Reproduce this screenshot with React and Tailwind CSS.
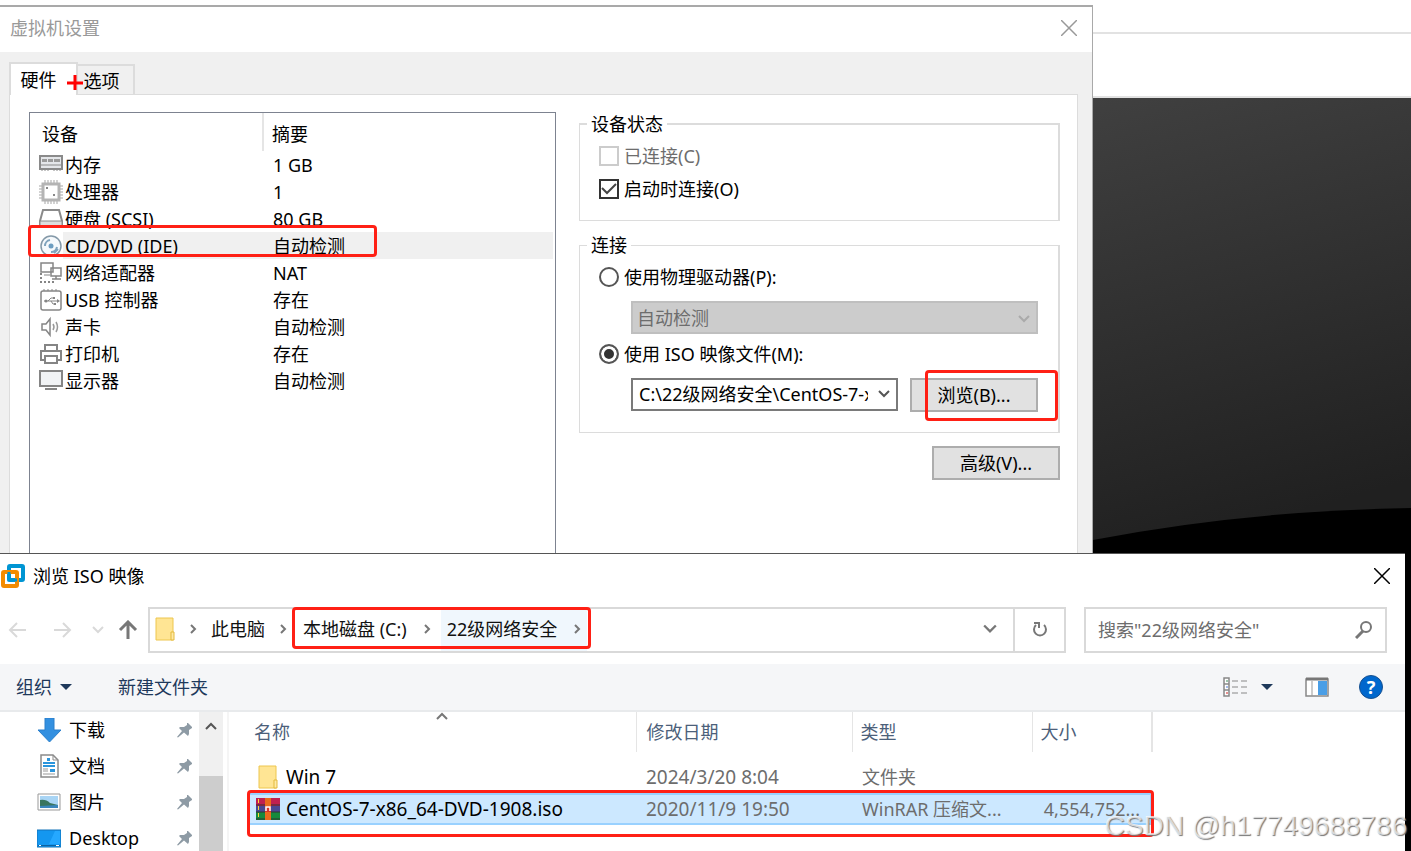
import { useState } from 'react';
import clsx from 'clsx';

const DEVICES = [
  { icon: 'memory', name: '内存', summary: '1 GB' },
  { icon: 'cpu', name: '处理器', summary: '1' },
  { icon: 'disk', name: '硬盘 (SCSI)', summary: '80 GB' },
  { icon: 'cd', name: 'CD/DVD (IDE)', summary: '自动检测' },
  { icon: 'network', name: '网络适配器', summary: 'NAT' },
  { icon: 'usb', name: 'USB 控制器', summary: '存在' },
  { icon: 'sound', name: '声卡', summary: '自动检测' },
  { icon: 'printer', name: '打印机', summary: '存在' },
  { icon: 'display', name: '显示器', summary: '自动检测' },
];

const FILES = [
  { icon: 'folder', name: 'Win 7', date: '2024/3/20 8:04', type: '文件夹', size: '' },
  { icon: 'rar', name: 'CentOS-7-x86_64-DVD-1908.iso', date: '2020/11/9 19:50', type: 'WinRAR 压缩文...', size: '4,554,752...' },
];

const QUICK_ACCESS = [
  { icon: 'download', name: '下载' },
  { icon: 'document', name: '文档' },
  { icon: 'picture', name: '图片' },
  { icon: 'desktop', name: 'Desktop' },
];

function DeviceIcon({ name }) {
  const shapes = {
    memory: (
      <>
        <path d="M1 3h22v13H1z" fill="#e4e6e9" stroke="#8a8a8a" strokeWidth="2" />
        <path d="M3 6h5v3H3zM9 6h5v3H9zM15 6h6v3h-6z" fill="#9a9a9a" />
        <path d="M1 12h22" stroke="#8a8a8a" />
        <path d="M3 16v2M6 16v2M9 16v2M15 16v2M18 16v2M21 16v2" stroke="#8a8a8a" />
      </>
    ),
    cpu: (
      <>
        <path d="M6 0v24M9 0v24M12 0v24M15 0v24M18 0v24M0 6h24M0 9h24M0 12h24M0 15h24M0 18h24" stroke="#a5a5a5" />
        <rect x="4" y="4" width="16" height="16" fill="#fff" stroke="#b4b4b4" strokeWidth="3" />
        <path d="M7 7h2v2H7zM14 14h2v2h-2z" fill="#888" />
      </>
    ),
    disk: (
      <>
        <path d="M4 3h16l3 11v6H1v-6z" fill="#fff" stroke="#8a8a8a" strokeWidth="2" />
        <path d="M1 14h22v5H1z" fill="#ddd" stroke="#8a8a8a" />
      </>
    ),
    cd: (
      <>
        <circle cx="12" cy="12" r="10" fill="#f5f9fc" stroke="#8499a8" strokeWidth="1.5" />
        <path d="M6 12a6 6 0 0 1 5-6M12 18a6 6 0 0 0 6-5M15 19l4-4" fill="none" stroke="#7fa3bd" strokeWidth="2" />
        <circle cx="12" cy="12" r="2.5" fill="#6c9dc0" />
      </>
    ),
    network: (
      <>
        <path d="M2 2h12v9H2zM12 7h10v8H12z" fill="#fff" stroke="#858585" strokeWidth="1.5" />
        <path d="M17 15v3M13 18h9" stroke="#858585" strokeWidth="1.5" />
        <path d="M2 12v9h13" fill="none" stroke="#858585" strokeWidth="2" strokeDasharray="2 2" />
        <path d="M5 14h6" stroke="#858585" />
      </>
    ),
    usb: (
      <>
        <rect x="2" y="3" width="20" height="19" rx="2" fill="#fff" stroke="#858585" strokeWidth="1.5" />
        <path d="M4 2h16" stroke="#858585" strokeDasharray="2 2" />
        <path d="M5 13h13M9 13l3-3h3M12 13l2 3h2" fill="none" stroke="#858585" />
        <circle cx="7" cy="13" r="1.5" fill="#858585" />
        <path d="M14 9h2v2h-2zM15 15h2v2h-2zM18 11l3 2-3 2z" fill="#858585" />
      </>
    ),
    sound: (
      <>
        <path d="M3 9h4l4-5v16l-4-5H3z" fill="#fff" stroke="#858585" strokeWidth="1.5" />
        <path d="M14 9q2 3 0 6M17 7q3 5 0 10" fill="none" stroke="#999" strokeWidth="1.5" />
      </>
    ),
    printer: (
      <>
        <path d="M6 9V3h12v6" fill="#fff" stroke="#858585" strokeWidth="2" />
        <path d="M2 9h20v9H2z" fill="#fff" stroke="#858585" strokeWidth="2" />
        <path d="M6 14h12v7H6z" fill="#fff" stroke="#858585" strokeWidth="2" />
      </>
    ),
    display: (
      <>
        <path d="M1 2h22v15H1z" fill="#f1f3f5" stroke="#858585" strokeWidth="2" />
        <path d="M6 20h12" stroke="#858585" strokeWidth="2" />
      </>
    ),
  };
  return (
    <svg className="h-6 w-6 shrink-0" viewBox="0 0 24 24" aria-hidden="true">
      {shapes[name]}
    </svg>
  );
}

function FileIcon({ name }) {
  const shapes = {
    folder: (
      <>
        <path d="M3 1h17v22H3z" fill="#ffe594" stroke="#edc64f" />
        <path d="M18 15h3v8h-3z" fill="#ffeaa5" stroke="#e3b93c" />
      </>
    ),
    rar: (
      <>
        <path d="M0 1h24v8H0z" fill="#c02050" />
        <path d="M0 9h24v6H0z" fill="#4a4794" />
        <path d="M0 15h24v8H0z" fill="#158a3c" />
        <path d="M0 8h24M0 15h24M0 22h24" stroke="#333" />
        <path d="M9 1h6v22H9z" fill="#ea6a1c" />
        <path d="M9 9h6v6H9z" fill="#d8322a" />
        <path d="M10 14v-4h4v4" fill="none" stroke="#fff" strokeWidth="1.5" />
        <path d="M2.5 2v20" stroke="#ffd83a" strokeDasharray="4 3" />
      </>
    ),
    download: <path d="M8 0h9v12h7L12.5 24 1 12h7z" fill="#3390e0" stroke="#2a7fcb" />,
    document: (
      <>
        <path d="M4 1h12l5 5v17H4z" fill="#fff" stroke="#8b8b8b" strokeWidth="1.5" />
        <path d="M16 1v5h5" fill="none" stroke="#8b8b8b" />
        <path d="M10 4h3v3h-3zM6 8h12v2H6zM6 11h12v2H6zM13 15h5v3h-5z" fill="#2b95dc" />
        <path d="M6 15h5M6 17h5M6 20h12" stroke="#999" />
      </>
    ),
    picture: (
      <>
        <path d="M1 4h22v16H1z" fill="#fff" stroke="#999" />
        <path d="M3 6h18v12H3z" fill="#a9d5f5" />
        <path d="M3 10q6-1 10 3l8 2v3H3z" fill="#39755f" />
        <path d="M3 16l18-1v3H3z" fill="#3b86bd" />
      </>
    ),
    desktop: (
      <>
        <path d="M0 4h24v17H0z" fill="#1497f0" stroke="#1273b9" />
        <path d="M23 5v13H12l6-13z" fill="#25a8ff" />
        <path d="M1 19.5h22" stroke="#0d62a0" />
        <path d="M2 19.5h2M19 19.5h3" stroke="#fff" />
      </>
    ),
  };
  return (
    <svg className="h-6 w-6 shrink-0" viewBox="0 0 24 24" aria-hidden="true">
      {shapes[name]}
    </svg>
  );
}

function PinIcon() {
  return (
    <svg className="h-4 w-4" viewBox="0 0 16 16" fill="#8e9ba5" aria-hidden="true">
      <path d="M10 1h1l4 4v1l-3 2v4l-1 2L7 10.5 1 15.5 0 15l5-6-3-3 1-1h4l3-2z" />
    </svg>
  );
}

function CloseIcon() {
  return (
    <svg className="h-4 w-4" viewBox="0 0 16 16" fill="none" stroke="currentColor" strokeWidth="1.5">
      <path d="M0 0l16 16M16 0L0 16" />
    </svg>
  );
}

function Chevron({ className }) {
  return (
    <svg className={clsx('h-3 w-3 shrink-0', className)} viewBox="0 0 12 12" fill="none" stroke="currentColor" strokeWidth="2">
      <path d="M1 3l5 5 5-5" />
    </svg>
  );
}

function CrumbArrow({ className }) {
  return (
    <svg className={clsx('h-2.5 w-2 shrink-0 text-[#777]', className)} viewBox="0 0 8 10" fill="none" stroke="currentColor" strokeWidth="2">
      <path d="M2 1l4 4-4 4" />
    </svg>
  );
}

// Red rectangle drawn over the thing the reader should look at
function Marker({ className }) {
  return <div className={clsx('pointer-events-none absolute z-10 rounded-sm border-3 border-[#ff2015]', className)} />;
}

function DeviceTable() {
  const [selected, setSelected] = useState('cd');

  return (
    <div className="relative w-[527px] shrink-0 border border-b-0 border-[#7d8390] pr-0.5">
      <table className="w-full table-fixed border-collapse text-left">
        <thead>
          <tr className="h-[38px]">
            <th className="w-[233px] border-r-2 border-[#e5e5e5] pl-3 pt-1 font-normal">设备</th>
            <th className="pl-2 pt-1 font-normal">摘要</th>
          </tr>
        </thead>
        <tbody>
          {DEVICES.map((device) => (
            <tr key={device.icon} onClick={() => setSelected(device.icon)} className="h-[27px]">
              <td className="p-0 pl-[9px]">
                <div className="flex h-[27px] items-center">
                  <DeviceIcon name={device.icon} />
                  <span className={clsx('flex h-[27px] flex-1 items-center pl-0.5', selected === device.icon && 'bg-[#f0f0f0]')}>
                    {device.name}
                  </span>
                </div>
              </td>
              <td className={clsx('p-0 pl-2.5', selected === device.icon && 'bg-[#f0f0f0]')}>{device.summary}</td>
            </tr>
          ))}
        </tbody>
      </table>
      <Marker className="-left-0.5 top-[112px] h-8 w-[349px]" />
    </div>
  );
}

function ConnectionSettings() {
  const [source, setSource] = useState('iso');
  const [atPowerOn, setAtPowerOn] = useState(true);

  return (
    <div className="flex-1">
      <fieldset className="h-[109px] border border-r-2 border-t-2 border-[#dcdcdc] pl-[19px]">
        <legend className="-ml-3 px-1 leading-6">设备状态</legend>
        <label className="mt-2 flex items-center gap-[5px] leading-6 text-[#6d6d6d]">
          <input type="checkbox" disabled className="h-5 w-5 appearance-none border-2 border-[#ccc] bg-white" />
          已连接(C)
        </label>
        <label className="mt-[9px] flex items-center gap-[5px] leading-6">
          <span className="relative flex">
            <input
              type="checkbox"
              checked={atPowerOn}
              onChange={(e) => setAtPowerOn(e.target.checked)}
              className="h-5 w-5 appearance-none border-2 border-[#333] bg-white"
            />
            {atPowerOn && (
              <svg className="pointer-events-none absolute inset-0 h-5 w-5" viewBox="0 0 20 20" fill="none" stroke="#444" strokeWidth="2">
                <path d="M3 9l5 5 9-9" />
              </svg>
            )}
          </span>
          启动时连接(O)
        </label>
      </fieldset>

      <fieldset className="mt-3 h-[200px] border border-r-2 border-[#dcdcdc] pl-[19px] pr-5">
        <legend className="-ml-3 px-1 leading-6">连接</legend>
        <label className="mt-2 flex items-center gap-[5px] leading-6">
          <input
            type="radio"
            name="source"
            checked={source === 'physical'}
            onChange={() => setSource('physical')}
            className="h-5 w-5 appearance-none rounded-full border-2 border-[#555] bg-white checked:bg-[#333] checked:shadow-[inset_0_0_0_3px_white]"
          />
          使用物理驱动器(P):
        </label>
        <div className="relative ml-8 mt-3">
          <select disabled aria-label="物理驱动器" className="h-[33px] w-full appearance-none border-2 border-[#bfbfbf] bg-[#ccc] pl-1 text-[#6d6d6d] opacity-100">
            <option>自动检测</option>
          </select>
          <Chevron className="pointer-events-none absolute right-2 top-3 text-[#aaa]" />
        </div>
        <label className="mt-2 flex items-center gap-[5px] leading-6">
          <input
            type="radio"
            name="source"
            checked={source === 'iso'}
            onChange={() => setSource('iso')}
            className="h-5 w-5 appearance-none rounded-full border-2 border-[#555] bg-white checked:bg-[#333] checked:shadow-[inset_0_0_0_3px_white]"
          />
          使用 ISO 映像文件(M):
        </label>
        <div className="relative ml-8 mt-3 flex gap-3">
          <div className="relative flex h-[33px] w-[267px] items-center border-2 border-[#7a7a7a] bg-white pb-0.5">
            <input
              aria-label="ISO 映像文件"
              defaultValue="C:\22级网络安全\CentOS-7-x86_64-DVD-1908.iso"
              className="mr-7 min-w-0 flex-1 pl-1.5 outline-none"
            />
            <Chevron className="absolute right-1.5 text-[#555]" />
          </div>
          <button className="h-[34px] flex-1 border-2 border-[#adadad] bg-[#e1e1e1]">浏览(B)...</button>
          <Marker className="-right-5 -top-2 h-[51px] w-[133px]" />
        </div>
      </fieldset>

      <div className="mt-[13px] flex justify-end">
        <button className="h-[34px] w-32 border-2 border-[#adadad] bg-[#e1e1e1]">高级(V)...</button>
      </div>
    </div>
  );
}

function SettingsDialog() {
  return (
    <section className="min-w-0 flex-1 border-r border-t-2 border-[#a9a9a9] bg-[#f0f0f0]">
      <header className="flex h-[45px] items-center justify-between bg-white pb-1 pl-2.5 pr-[15px] text-[#999]">
        <h1>虚拟机设置</h1>
        <button aria-label="关闭"><CloseIcon /></button>
      </header>
      <div className="pl-[9px] pr-3.5 pt-2.5">
        <div className="relative flex items-end">
          <button className="relative z-10 -mb-px h-[33px] w-[69px] border-2 border-b-0 border-[#dcdcdc] bg-white pr-2.5">硬件</button>
          <button className="h-[30px] w-[57px] border-2 border-b-0 border-l-0 border-[#dcdcdc] pr-2 pt-0.5">选项</button>
          <svg className="absolute bottom-1 left-[58px] z-20 h-4 w-4" viewBox="0 0 16 16" stroke="#f00" strokeWidth="3">
            <path d="M8 1v15M0 9h16" />
          </svg>
        </div>
        <div className="flex h-[459px] gap-[23px] border border-b-0 border-[#dcdcdc] bg-white pl-[19px] pr-[17px] pt-[17px]">
          <DeviceTable />
          <ConnectionSettings />
        </div>
      </div>
    </section>
  );
}

function GuestScreen() {
  return (
    <div className="flex w-[318px] shrink-0 flex-col bg-white">
      <div className="mt-[27px] h-[66px] border-y-2 border-[#e2e2e2]" />
      <svg className="w-full flex-1" viewBox="0 0 318 455" preserveAspectRatio="none">
        <defs>
          <linearGradient id="screen" x1="0" y1="0" x2="0.2" y2="1">
            <stop offset="0" stopColor="#404040" />
            <stop offset="1" stopColor="#202020" />
          </linearGradient>
        </defs>
        <path d="M0 0h318v455H0z" fill="url(#screen)" />
        <path d="M0 442Q150 413 318 410v45H0z" fill="#000" />
      </svg>
    </div>
  );
}

function AddressBar() {
  return (
    <nav className="flex items-center pl-2 pr-[18px]">
      <button aria-label="后退" className="text-[#d9d9d9]">
        <svg className="h-5 w-5" viewBox="0 0 20 20" fill="none" stroke="currentColor" strokeWidth="2"><path d="M18 10H2M9 3l-7 7 7 7" /></svg>
      </button>
      <button aria-label="前进" className="ml-6 text-[#d9d9d9]">
        <svg className="h-5 w-5" viewBox="0 0 20 20" fill="none" stroke="currentColor" strokeWidth="2"><path d="M2 10h16M11 3l7 7-7 7" /></svg>
      </button>
      <Chevron className="ml-5 text-[#d9d9d9]" />
      <button aria-label="上移" className="ml-3.5 text-[#777]">
        <svg className="h-5 w-5" viewBox="0 0 20 20" fill="none" stroke="currentColor" strokeWidth="3"><path d="M10 19V2M2 10l8-8 8 8" /></svg>
      </button>
      <div className="relative ml-2.5 flex h-[46px] flex-1 items-center border-2 border-[#d9d9d9] pb-0.5 text-[#111]">
        <span className="ml-[3px]"><FileIcon name="folder" /></span>
        <CrumbArrow className="ml-3" />
        <a href="#pc" className="ml-3.5">此电脑</a>
        <CrumbArrow className="ml-3.5" />
        <a href="#c" className="ml-4">本地磁盘 (C:)</a>
        <CrumbArrow className="ml-4" />
        <span className="-mb-0.5 ml-2.5 flex h-[42px] items-center bg-[#f0f7fd] pb-0.5 pr-1.5">
          <a href="#dir" className="pl-1.5 pr-4">22级网络安全</a>
          <CrumbArrow />
        </span>
        <button aria-label="历史记录" className="ml-auto pr-4"><Chevron className="h-3.5 w-3.5 text-[#777]" /></button>
        <button aria-label="刷新" className="-mb-0.5 flex h-[42px] w-[51px] items-center justify-center border-l-2 border-[#d9d9d9]">
          <svg className="h-5 w-5" viewBox="0 0 20 20" fill="none" stroke="#777" strokeWidth="2">
            <path d="M14 5a6 6 0 1 1-8 0M4 3h5v5" />
          </svg>
        </button>
        <Marker className="-top-0.5 left-[142px] h-[42px] w-[299px]" />
      </div>
      <div className="ml-[18px] flex h-[46px] w-[303px] items-center border-2 border-[#d9d9d9] pl-3 pr-3">
        <input type="search" aria-label="搜索" placeholder={'搜索"22级网络安全"'} className="min-w-0 flex-1 outline-none placeholder:text-[#6d6d6d]" />
        <svg className="h-[18px] w-[18px]" viewBox="0 0 18 18" fill="none" stroke="#777" strokeWidth="2">
          <circle cx="11" cy="6" r="5" />
          <path d="M8 10l-7 7" strokeWidth="3" />
        </svg>
      </div>
    </nav>
  );
}

function Toolbar() {
  return (
    <div className="mt-[11px] flex h-12 items-center border-b-2 border-[#e8eaec] bg-[#f5f6f8] pb-px pl-4 pr-[22px] text-[#1e395b]">
      <button className="flex items-center gap-2">
        组织
        <svg className="h-1.5 w-3" viewBox="0 0 12 6" fill="currentColor"><path d="M0 0h12L6 6z" /></svg>
      </button>
      <button className="ml-[46px]">新建文件夹</button>
      <button aria-label="视图" className="ml-auto flex items-center gap-3.5">
        <svg className="h-5 w-6" viewBox="0 0 24 20" fill="none" stroke="#888">
          <path d="M1 1h5v18H1zM1 7h5M1 13h5" fill="#fff" strokeWidth="1.5" />
          <path d="M9 4h6M18 4h6M9 10h6M18 10h6M9 16h6M18 16h6" />
          <path d="M3 4h2" stroke="#3a8a5a" />
          <path d="M3 10h2" stroke="#4a78d8" />
          <path d="M3 16h2" stroke="#d02020" />
        </svg>
        <svg className="h-1.5 w-3" viewBox="0 0 12 6" fill="currentColor"><path d="M0 0h12L6 6z" /></svg>
      </button>
      <button aria-label="预览窗格" className="ml-8">
        <svg className="h-5 w-6" viewBox="0 0 24 20">
          <path d="M1 2h22v17H1z" fill="#fff" stroke="#888" strokeWidth="1.5" />
          <path d="M1 2h22" stroke="#777" strokeWidth="3" />
          <path d="M7 4v15" stroke="#999" />
          <path d="M13 4h9v14h-9z" fill="#4a9ee6" />
        </svg>
      </button>
      <button aria-label="帮助" className="ml-[30px] flex h-6 w-6 items-center justify-center rounded-full border border-[#17508f] bg-[#0067cd] font-bold text-white">
        ?
      </button>
    </div>
  );
}

function Sidebar() {
  return (
    <aside className="flex h-[140px] w-[229px] shrink-0 overflow-hidden border-r-2 border-[#f5f5f5]">
      <ul className="flex-1">
        {QUICK_ACCESS.map((item) => (
          <li key={item.name} className="flex h-9 items-center pl-[37px] pr-1.5">
            <FileIcon name={item.icon} />
            <a href={`#${item.icon}`} className="ml-2 flex-1">{item.name}</a>
            <PinIcon />
          </li>
        ))}
      </ul>
      <div className="mr-1 flex w-6 flex-col items-center bg-[#f0f0f0]">
        <Chevron className="mt-2 rotate-180 text-[#555]" />
        <div className="mt-auto h-[76px] w-full bg-[#cdcdcd]" />
      </div>
    </aside>
  );
}

function FileList() {
  const [selected, setSelected] = useState('rar');

  return (
    <div className="relative flex-1 pl-[19px]">
      <Chevron className="absolute left-[207px] -top-0.5 rotate-180 text-[#777]" />
      <table className="w-[905px] table-fixed border-collapse text-left">
        <thead>
          <tr className="h-10 text-[#4c607a]">
            <th className="w-[388px] border-r border-[#e5e5e5] pl-1.5 font-normal">名称</th>
            <th className="w-[216px] border-r border-[#e5e5e5] pl-2.5 font-normal">修改日期</th>
            <th className="w-[180px] border-r border-[#e5e5e5] pl-2 font-normal">类型</th>
            <th className="border-r-2 border-[#e5e5e5] pl-2 font-normal">大小</th>
          </tr>
        </thead>
        <tbody className="before:block before:h-[9px]">
          {FILES.map((file) => (
            <tr
              key={file.icon}
              onClick={() => setSelected(file.icon)}
              className={clsx('h-8 text-[#6d6d6d]', selected === file.icon && 'bg-[#cce8ff] outline-2 -outline-offset-2 outline-[#99d1ff]')}
            >
              <td className="p-0 pl-2">
                <div className="flex items-center gap-1.5 text-[19px] text-black">
                  <FileIcon name={file.icon} />
                  {file.name}
                </div>
              </td>
              <td className="p-0 pl-2.5 text-[19px]">{file.date}</td>
              <td className="p-0 pl-2.5">{file.type}</td>
              <td className="p-0 pr-3 text-right">{file.size}</td>
            </tr>
          ))}
        </tbody>
      </table>
      <Marker className="left-[18px] top-[78px] h-[47px] w-[907px]" />
    </div>
  );
}

function BrowseDialog() {
  return (
    <section className="mr-1.5 border-t border-[#555] bg-white">
      <header className="flex h-[44px] items-center pl-px pr-[15px]">
        <svg className="h-6 w-6" viewBox="0 0 24 24" fill="none" strokeWidth="4">
          <rect x="8" y="2" width="14" height="14" rx="1" stroke="#0095d3" />
          <rect x="2" y="8" width="14" height="14" rx="1" stroke="#f38b00" />
          <path d="M8 8v8h8" stroke="#0095d3" strokeWidth="3" />
        </svg>
        <h2 className="ml-2 flex-1">浏览 ISO 映像</h2>
        <button aria-label="关闭"><CloseIcon /></button>
      </header>
      <div className="mt-[9px]">
        <AddressBar />
      </div>
      <Toolbar />
      <div className="flex">
        <Sidebar />
        <FileList />
      </div>
    </section>
  );
}

export default function App() {
  return (
    <div className="relative min-h-screen overflow-hidden bg-black font-['Noto_Sans','Noto_Sans_CJK_SC',sans-serif] text-lg leading-6 text-black">
      <div className="flex bg-white pt-[5px]">
        <SettingsDialog />
        <GuestScreen />
      </div>
      <BrowseDialog />
      <p className="pointer-events-none absolute bottom-3.5 right-1 z-20 font-['Liberation_Sans',sans-serif] text-[28px] text-white/70 [text-shadow:1px_1px_1px_#777]">
        CSDN @h17749688786
      </p>
    </div>
  );
}
